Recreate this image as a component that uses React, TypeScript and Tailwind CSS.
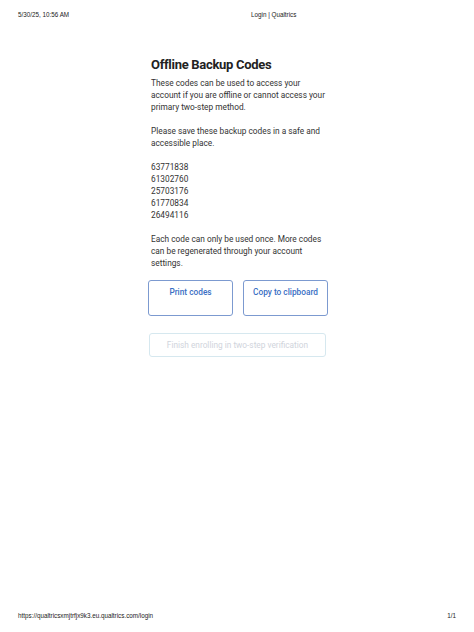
import React from "react";

export default function App() {
  return (
    <div className="relative w-[474px] h-[632px] bg-white overflow-hidden">
      <div className="flex items-center h-[30px] pl-[18px] text-[6.3px] text-[#222] font-['Liberation_Sans',Arial,sans-serif]">
        <span className="w-[233px]">5/30/25, 10:56 AM</span>
        <span>Login | Qualtrics</span>
      </div>
      <div className="pl-[151px] pt-[26px] w-[330px] font-['Roboto',sans-serif] text-[#333]">
        <h1 className="text-[13px] leading-[18px] font-bold text-[#222] tracking-[-0.3px]">Offline Backup Codes</h1>
        <div className="mt-[3px] text-[8.3px] leading-[12px] w-[178px]">
          <p>These codes can be used to access your account if you are offline or cannot access your primary two-step method.</p>
          <p className="mt-[12px]">Please save these backup codes in a safe and accessible place.</p>
          <div className="mt-[12px]">
            <div>63771838</div>
            <div>61302760</div>
            <div>25703176</div>
            <div>61770834</div>
            <div>26494116</div>
          </div>
          <p className="mt-[12px]">Each code can only be used once. More codes can be regenerated through your account settings.</p>
        </div>
      </div>
      <div className="pl-[148px] mt-[11px] font-['Roboto',sans-serif]">
        <div className="flex gap-[10px]">
          <button className="w-[85px] h-[36px] border border-[#7c9ad0] rounded-[3px] text-[#3a6fc4] text-[8.3px] font-medium flex justify-center pt-[5px]">Print codes</button>
          <button className="w-[85px] h-[36px] border border-[#7c9ad0] rounded-[3px] text-[#3a6fc4] text-[8.3px] font-medium flex justify-center pt-[5px]">Copy to clipboard</button>
        </div>
        <button className="mt-[17px] ml-[1px] w-[177px] h-[24px] border border-[#d6e8ef] rounded-[3px] text-[#d0d4dc] text-[8.3px] flex items-center justify-center">Finish enrolling in two-step verification</button>
      </div>
      <div className="absolute left-0 right-0 bottom-0 h-[32px] flex items-center pl-[18px] pr-[18px] text-[6.3px] text-[#222] font-['Liberation_Sans',Arial,sans-serif] justify-between">
        <span>https://qualtricsxmjtrfjx9k3.eu.qualtrics.com/login</span>
        <span>1/1</span>
      </div>
    </div>
  );
}
